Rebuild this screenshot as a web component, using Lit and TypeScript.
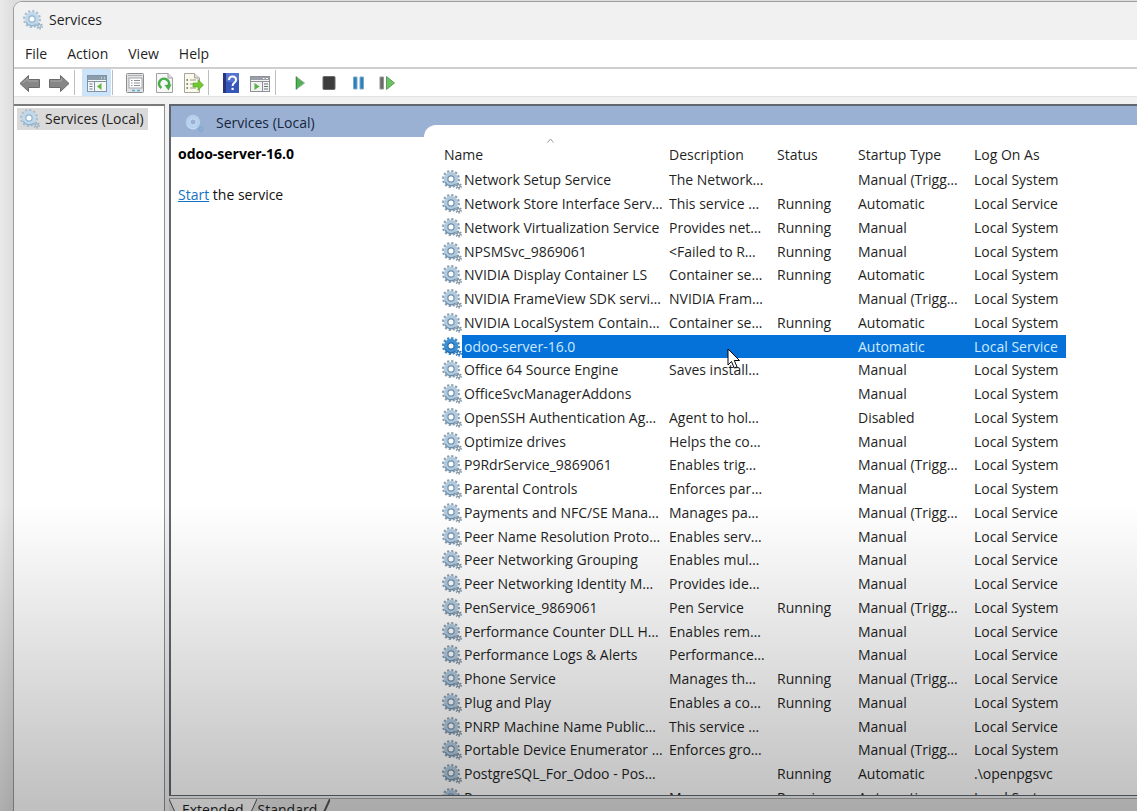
import { LitElement, html, svg, css } from "lit";
import { customElement, property, state } from "lit/decorators.js";

type Service = [name: string, description: string, status: string, startup: string, logOn: string];

const SERVICES: Service[] = [
  ["Network Setup Service", "The Network…", "", "Manual (Trigg…", "Local System"],
  ["Network Store Interface Serv…", "This service …", "Running", "Automatic", "Local Service"],
  ["Network Virtualization Service", "Provides net…", "Running", "Manual", "Local System"],
  ["NPSMSvc_9869061", "<Failed to R…", "Running", "Manual", "Local System"],
  ["NVIDIA Display Container LS", "Container se…", "Running", "Automatic", "Local System"],
  ["NVIDIA FrameView SDK servi…", "NVIDIA Fram…", "", "Manual (Trigg…", "Local System"],
  ["NVIDIA LocalSystem Contain…", "Container se…", "Running", "Automatic", "Local System"],
  ["odoo-server-16.0", "", "", "Automatic", "Local Service"],
  ["Office 64 Source Engine", "Saves install…", "", "Manual", "Local System"],
  ["OfficeSvcManagerAddons", "", "", "Manual", "Local System"],
  ["OpenSSH Authentication Ag…", "Agent to hol…", "", "Disabled", "Local System"],
  ["Optimize drives", "Helps the co…", "", "Manual", "Local System"],
  ["P9RdrService_9869061", "Enables trig…", "", "Manual (Trigg…", "Local System"],
  ["Parental Controls", "Enforces par…", "", "Manual", "Local System"],
  ["Payments and NFC/SE Mana…", "Manages pa…", "", "Manual (Trigg…", "Local Service"],
  ["Peer Name Resolution Proto…", "Enables serv…", "", "Manual", "Local Service"],
  ["Peer Networking Grouping", "Enables mul…", "", "Manual", "Local Service"],
  ["Peer Networking Identity M…", "Provides ide…", "", "Manual", "Local Service"],
  ["PenService_9869061", "Pen Service", "Running", "Manual (Trigg…", "Local System"],
  ["Performance Counter DLL H…", "Enables rem…", "", "Manual", "Local Service"],
  ["Performance Logs & Alerts", "Performance…", "", "Manual", "Local Service"],
  ["Phone Service", "Manages th…", "Running", "Manual (Trigg…", "Local Service"],
  ["Plug and Play", "Enables a co…", "Running", "Manual", "Local System"],
  ["PNRP Machine Name Public…", "This service …", "", "Manual", "Local Service"],
  ["Portable Device Enumerator …", "Enforces gro…", "", "Manual (Trigg…", "Local System"],
  ["PostgreSQL_For_Odoo - Pos…", "", "Running", "Automatic", ".\\openpgsvc"],
  ["Power", "Manages po…", "Running", "Automatic", "Local System"],
];

/* Pair of meshed gears: a dashed rim for the teeth, a ring for the body. */
@customElement("gear-icon")
export class GearIcon extends LitElement {
  @property() tone = "normal";

  static styles = css`
    :host { display: block; width: 20px; height: 20px; flex: none; --rim: #8b9fb0; --body: #b2cade; --edge: #6d8fac; --small: #7f94a5; --hole: #fff; }
    :host([tone="pale"]) { --rim: #a9bdcd; --body: #c0d8ea; --edge: #8fb3d0; --small: #98b4c9; }
    :host([tone="selected"]) { --rim: #3f86bd; --body: #3c8fd4; --edge: #2468a8; --small: #2c73b5; }
    :host([tone="bar"]) { --rim: transparent; --body: #b4d0ec; --edge: #c3dcf2; --small: #84a9d2; --hole: #9ab1d4; }
    svg { display: block; width: 20px; height: 20px; }
  `;

  render() {
    return html`<svg viewBox="0 0 20 20" aria-hidden="true">
      <circle cx="9" cy="9" r="7.8" fill="none" stroke="var(--rim)" stroke-width="2.400" stroke-dasharray="2.200 1.880" />
      <circle cx="9" cy="9" r="5.200" fill="var(--hole)" stroke="var(--body)" stroke-width="4" />
      <circle cx="9" cy="9" r="3.100" fill="var(--hole)" stroke="var(--edge)" stroke-width="1.200" />
      <path d="M3 12A6.700 6.700 0 0 0 13.500 14" fill="none" stroke="var(--edge)" stroke-width="1.300" />
      <circle cx="16.600" cy="16.200" r="2.600" fill="none" stroke="var(--small)" stroke-width="1.700" stroke-dasharray="1.400 1.320" />
      <circle cx="16.600" cy="16.200" r="1.500" fill="none" stroke="var(--small)" stroke-width="1.200" />
    </svg>`;
  }
}

const ICONS: Record<string, unknown> = {
  back: svg`<path d="M1 11.500 9.500 3.500V7.500H20.500V15.500H9.500V19.500Z" fill="#868686" stroke="#6b6b6b" stroke-width="1"/><path d="M4 11 9 6.500V9H19" fill="none" stroke="#a9a9a9"/>`,
  forward: svg`<path d="M21 11.500 12.500 3.500V7.500H1.500V15.500H12.500V19.500Z" fill="#868686" stroke="#6b6b6b" stroke-width="1"/><path d="M2.500 9H13.500V6.500" fill="none" stroke="#a9a9a9"/>`,
  tree: svg`<rect x="1.500" y="3.500" width="19" height="16" fill="#f4f6f8" stroke="#8192a3"/><path d="M2 4H20V8H2Z" fill="#8b9cad"/><path d="M15 6h1M18 6h1" stroke="#fff"/><path d="M2 9.500H20M8.500 10V19" stroke="#8192a3"/><path d="M3.500 12h3M3.500 14.500h3M3.500 17h3" stroke="#6f8193"/><path d="M15.500 11V18L11 14.500Z" fill="#66b83c"/>`,
  props: svg`<rect x="2.500" y="1.500" width="17" height="19" rx="1" fill="#e2e3e4" stroke="#8b8d8f"/><rect x="5" y="6" width="13" height="10" fill="#fff" stroke="#9fa3a6"/><path d="M4 3.500h14" stroke="#aeb1b3"/><path d="M7 8.500h1.500M10 8.500h6M7 11h1.500M10 11h6M7 13.500h1.500M10 13.500h6" stroke="#8d9194"/><path d="M8 18.500h3M13 18.500h3" stroke="#56a9d8" stroke-width="1.500"/>`,
  refresh: svg`<path d="M3.500 1.500H15L19.500 6V20.500H3.500Z" fill="#f7f7f7" stroke="#a3a3a3"/><path d="M15 1.500V6H19.500" fill="#ddd" stroke="#a3a3a3"/><path d="M8.500 16A5 5 0 1 1 15.500 14" fill="none" stroke="#45ad49" stroke-width="2.600"/><path d="M11.500 13 18.500 12.500 15.500 18.500Z" fill="#45ad49"/>`,
  export: svg`<path d="M2.500 1.500H12.500L17.500 6V20.500H2.500Z" fill="#fbf9ec" stroke="#a8a699"/><path d="M12.500 1.500V6H17.500" fill="#ddd" stroke="#a8a699"/><path d="M4.500 8h1.500M4.500 12h1.500M4.500 16h1.500" stroke="#4a6a4a" stroke-width="1.500"/><path d="M8 8h6M8 12h4M8 16h6" stroke="#9b9888"/><path d="M11 11h5V7.500L21.500 13 16 18.500V15H11Z" fill="#72c832" stroke="#4fa522" stroke-width=".6"/>`,
  help: svg`<rect x="3" y="1" width="16" height="20" fill="#3556b8"/><path d="M3 1H6V21H3Z" fill="#23367e"/><path d="M6 1H19V8Q12 12 6 9Z" fill="#5675d2"/><path d="M9 8Q9 4.500 12.500 4.500T16 8Q16 10 14 11.200 12.600 12 12.600 14" fill="none" stroke="#fff" stroke-width="2"/><rect x="11.500" y="15.800" width="2.200" height="2.200" fill="#fff"/>`,
  action: svg`<rect x="1.500" y="4.500" width="19" height="15" fill="#f3f3f3" stroke="#8d9197"/><path d="M2 5H20V8H2Z" fill="#9ba0a8"/><path d="M14 6.500h1.500M17 6.500h2" stroke="#fff"/><path d="M2 9.500H20M13.500 10V19" stroke="#8d9197"/><path d="M15 12h4M15 14.500h4M15 17h4" stroke="#6a7078"/><path d="M5.500 11V18L10.500 14.500Z" fill="#58b347"/>`,
  play: svg`<path d="M7 4.500 15.500 11 7 17.500Z" fill="#4fb356" stroke="#9aa89a" stroke-width="1"/><path d="M7.500 5V17" stroke="#2f9440"/>`,
  stop: svg`<rect x="5" y="4.500" width="12" height="13" rx="1" fill="#3c3c3c" stroke="#6b6b6b"/>`,
  pause: svg`<path d="M6.500 5h3.500v12h-3.500ZM13 5h3.500v12h-3.500Z" fill="#2a80bd" stroke="#7da8c6"/>`,
  restart: svg`<path d="M4 5h3.500v12h-3.500Z" fill="#6b6b6b" stroke="#959595"/><path d="M10.500 4.500 18.500 11 10.500 17.500Z" fill="#6cc25c" stroke="#5c9d65"/>`,
};

const icon = (name: string) =>
  html`<svg class="glyph" viewBox="0 0 22 22" aria-hidden="true">${ICONS[name]}</svg>`;

@customElement("app-root")
export class AppRoot extends LitElement {
  @state() private selected = 7;

  static styles = css`
    * { box-sizing: border-box; }
    :host {
      display: block;
      position: relative;
      height: 100vh;
      overflow: hidden;
      padding: 1px 0 0 13px;
      background: linear-gradient(90deg, #e9e9e9, #dedede 13px);
      color: #1f1f1f;
      font: 14px/20px "Open Sans", "Noto Sans", sans-serif;
    }
    button { font: inherit; color: inherit; background: none; border: 0; padding: 0; margin: 0; text-align: left; }
    .window {
      display: flex;
      flex-direction: column;
      height: calc(100% + 10px);
      border: 1px solid #9c9c9c;
      border-right: 0;
      border-radius: 9px 0 0 0;
      overflow: hidden;
      background: #f1f1f1;
    }
    .titlebar { display: flex; align-items: center; gap: 6px; height: 38px; padding: 0 9px 2px; background: #f1f1f1; }
    .titlebar h1 { margin: 0; font-size: 14px; font-weight: 400; }
    .menu { display: flex; align-items: center; gap: 20px; height: 27px; padding: 0 11px; background: #fff; }
    .toolbar { display: flex; align-items: center; height: 30px; padding: 0 1px; background: #fff; border-top: 2px solid #cfcfcf; border-bottom: 1px solid #e3e3e3; }
    .tool { display: grid; place-items: center; width: 29px; height: 27px; }
    .tool.active { background: #cce4f9; }
    .glyph { display: block; width: 22px; height: 22px; }
    .divider { width: 1px; height: 25px; background: #bdbdbd; margin: 0 7px 0 1px; }
    .divider.wide { margin-right: 9px; }
    .panes { display: flex; flex: 1; min-height: 0; gap: 4px; padding-top: 7px; }
    .tree { flex: none; width: 151px; padding: 2px 3px; background: #fff; border-top: 2px solid #7b7b7b; border-right: 1px solid #8f8f8f; }
    .node { display: flex; align-items: center; gap: 5px; height: 22px; padding: 0 4px 0 3px; background: #dadada; white-space: nowrap; }
    .main { display: flex; flex-direction: column; flex: 1; min-width: 0; }
    .view { display: flex; flex: 1; min-height: 0; overflow: hidden; background: #9ab1d4; border: 2px solid #5f6670; border-width: 2px 0 1px 2px; }
    .detail { display: flex; flex-direction: column; flex: none; width: 253px; }
    .banner { display: flex; align-items: center; gap: 12px; height: 31px; padding: 2px 13px 0; color: #17263c; }
    .banner h2 { margin: 0; font-size: 14px; font-weight: 400; }
    .info { flex: 1; padding: 7px; background: #fff; color: #111; }
    .info h3 { margin: 0 0 21px; font-size: 14px; line-height: 20px; font-weight: 700; color: #000; }
    .info p { margin: 0; }
    .info a { color: #1672c4; }
    .list { flex: 1; min-width: 0; margin-top: 19px; padding: 16px 0 0 18px; background: #fff; border-radius: 12px 0 0 0; overflow: hidden; }
    table { width: 624px; table-layout: fixed; border-collapse: collapse; }
    .c-icon { width: 20px; }
    .c-name { width: 205px; }
    .c-desc { width: 108px; }
    .c-status { width: 81px; }
    .c-startup { width: 116px; }
    .c-log { width: 94px; }
    th { position: relative; height: 27px; padding: 0 2px; font-weight: 400; text-align: left; }
    td { height: 24px; padding: 0 0 0 2px; white-space: nowrap; line-height: 20px; }
    tr:nth-child(4n) td { height: 23px; }
    td.mark { padding: 0; }
    .sort { position: absolute; left: 105px; top: -3px; width: 7px; height: 5px; }
    .picked td { background: #0472d9; color: #cdeaff; }
    .picked td.mark { background: none; }
    .tabs { display: flex; flex: none; height: 23px; margin-top: 2px; background: #e3e3e3; border-top: 1px solid #aaa; }
    .tabs svg { display: block; width: 12px; height: 22px; flex: none; }
    .tab { height: 22px; padding: 0 1px; line-height: 22px; }
    .tab.current { background: #fafafa; }
    .shade { position: absolute; inset: 0; pointer-events: none; background: linear-gradient(transparent 62%, rgba(0, 0, 0, 0.25)); }
    .cursor { position: absolute; left: 727px; top: 348px; width: 14px; height: 22px; pointer-events: none; }
  `;

  private tool(name: string, label: string, active = false) {
    return html`<button class="tool ${active ? "active" : ""}" aria-label=${label}>${icon(name)}</button>`;
  }

  render() {
    return html`
      <div class="window">
        <header class="titlebar"><gear-icon tone="pale"></gear-icon><h1>Services</h1></header>
        <nav class="menu">
          <button>File</button><button>Action</button><button>View</button><button>Help</button>
        </nav>
        <div class="toolbar" role="toolbar">
          ${this.tool("back", "Back")}${this.tool("forward", "Forward")}
          <span class="divider"></span>
          ${this.tool("tree", "Show tree", true)}
          <span class="divider"></span>
          ${this.tool("props", "Properties")}${this.tool("refresh", "Refresh")}${this.tool("export", "Export list")}
          <span class="divider"></span>
          ${this.tool("help", "Help")}${this.tool("action", "Show action pane")}
          <span class="divider wide"></span>
          ${this.tool("play", "Start service")}${this.tool("stop", "Stop service")}
          ${this.tool("pause", "Pause service")}${this.tool("restart", "Restart service")}
        </div>
        <div class="panes">
          <aside class="tree">
            <button class="node"><gear-icon tone="pale"></gear-icon>Services (Local)</button>
          </aside>
          <main class="main">
            <div class="view">
              <section class="detail">
                <div class="banner"><gear-icon tone="bar"></gear-icon><h2>Services (Local)</h2></div>
                <div class="info">
                  <h3>${SERVICES[this.selected][0]}</h3>
                  <p><a href="#start">Start</a> the service</p>
                </div>
              </section>
              <section class="list">
                <table>
                  <colgroup>
                    <col class="c-icon" /><col class="c-name" /><col class="c-desc" />
                    <col class="c-status" /><col class="c-startup" /><col class="c-log" />
                  </colgroup>
                  <thead>
                    <tr>
                      <th colspan="2">
                        Name
                        <svg class="sort" viewBox="0 0 7 5" aria-hidden="true"><path d="M.5 4.500 3.500 1 6.500 4.500" fill="none" stroke="#999" /></svg>
                      </th>
                      <th>Description</th><th>Status</th><th>Startup Type</th><th>Log On As</th>
                    </tr>
                  </thead>
                  <tbody>
                    ${SERVICES.map(
                      ([name, description, status, startup, logOn], i) => html`
                        <tr class=${i === this.selected ? "picked" : ""} @click=${() => (this.selected = i)}>
                          <td class="mark"><gear-icon tone=${i === this.selected ? "selected" : "normal"}></gear-icon></td>
                          <td>${name}</td><td>${description}</td><td>${status}</td><td>${startup}</td><td>${logOn}</td>
                        </tr>
                      `
                    )}
                  </tbody>
                </table>
              </section>
            </div>
            <div class="tabs">
              <svg viewBox="0 0 12 22" aria-hidden="true"><path d="M0 0H12V22H10Z" fill="#fafafa" /><path d="M0 0 10 22" stroke="#555" /></svg>
              <button class="tab current">Extended</button>
              <svg viewBox="0 0 12 22" aria-hidden="true"><path d="M0 0H12L2 22H0Z" fill="#fafafa" /><path d="M12 0 2 22" stroke="#555" /></svg>
              <button class="tab">Standard</button>
              <svg viewBox="0 0 12 22" aria-hidden="true"><path d="M12 0 2 22" stroke="#555" stroke-width="2" /></svg>
            </div>
          </main>
        </div>
      </div>
      <div class="shade"></div>
      <svg class="cursor" viewBox="0 0 14 22" aria-hidden="true">
        <path d="M1 1V17L4.500 13.500 7.200 20 10 18.800 7.300 12.500H12.500Z" fill="#fff" stroke="#000" />
      </svg>
    `;
  }
}
